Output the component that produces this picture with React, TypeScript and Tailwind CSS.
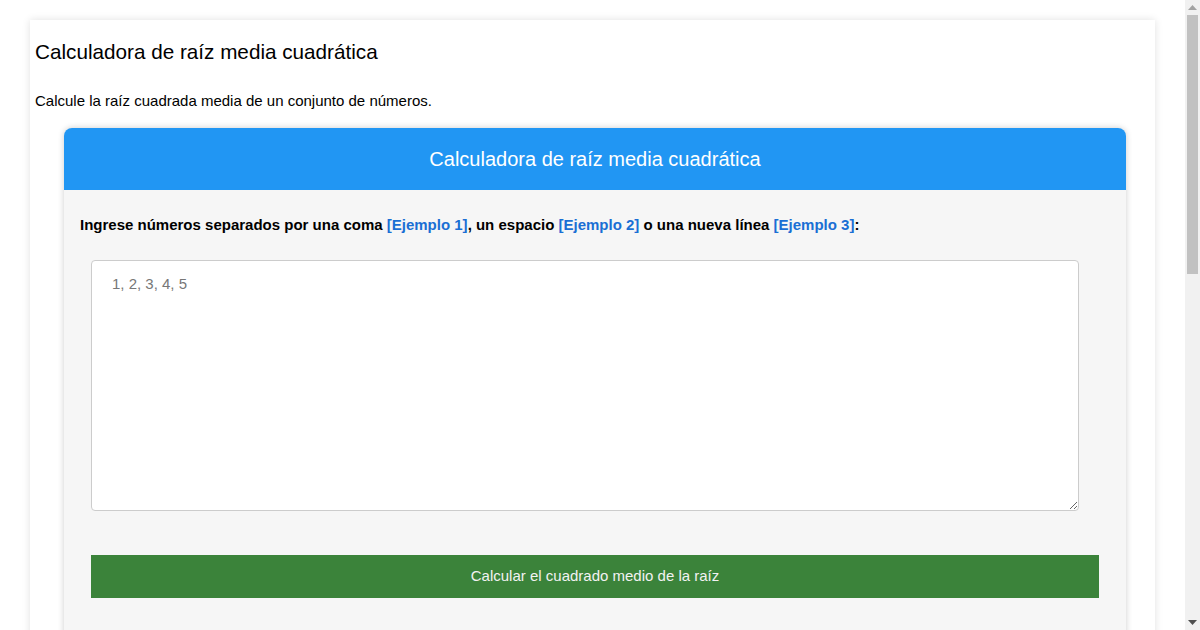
function FakeScrollbar() {
  return (
    <aside className="sticky top-0 flex h-[630px] w-[15px] shrink-0 flex-col items-center bg-[#f1f1f1]">
      <div className="flex h-[15px] items-center justify-center">
        <svg width="9" height="5" viewBox="0 0 9 5">
          <path d="M4.5 0 L9 5 L0 5 Z" fill="#a3a3a3" />
        </svg>
      </div>
      <div className="h-[259px] w-[11px] bg-[#c1c1c1]" />
      <div className="flex-1" />
      <div className="flex h-[15px] items-center justify-center">
        <svg width="9" height="5" viewBox="0 0 9 5">
          <path d="M0 0 L9 0 L4.5 5 Z" fill="#505050" />
        </svg>
      </div>
    </aside>
  );
}

export default function App() {
  return (
    <div className="flex bg-white font-['Liberation_Sans',Arial,sans-serif] text-black">
      <main className="min-h-[760px] flex-1 pt-[20px]">
        <div className="mx-[30px] bg-white px-[5px] pb-[40px] pt-[20px] shadow-[0_0_8px_rgba(0,0,0,0.12)]">
          <h1 className="text-[20.7px] leading-[23px]">Calculadora de raíz media cuadrática</h1>
          <p className="mt-[29px] text-[15px] leading-[17px]">
            Calcule la raíz cuadrada media de un conjunto de números.
          </p>

          <div className="ml-[29px] mt-[19px] w-[1062px] rounded-t-[8px] bg-[#f6f6f6] shadow-[0_0_6px_rgba(0,0,0,0.2)]">
            <div className="flex h-[62px] items-center justify-center rounded-t-[8px] bg-[#2196f3] text-[20px] text-white">
              Calculadora de raíz media cuadrática
            </div>

            <div className="px-[16px] pb-[40px] pt-[26px]">
              <p className="text-[15px] font-bold leading-[18px]">
                Ingrese números separados por una coma{' '}
                <a href="#" className="text-[#1a6fd4]">[Ejemplo 1]</a>, un espacio{' '}
                <a href="#" className="text-[#1a6fd4]">[Ejemplo 2]</a> o una nueva línea{' '}
                <a href="#" className="text-[#1a6fd4]">[Ejemplo 3]</a>:
              </p>

              <div className="px-[11px] pt-[26px]">
                <textarea
                  placeholder="1, 2, 3, 4, 5"
                  className="block h-[251px] w-[988px] rounded-[4px] border border-[#cccccc] bg-white px-[20px] py-[14px] text-[15px] leading-[18px] text-black outline-none placeholder:text-[#777777]"
                />
                <button className="mt-[44px] flex h-[43px] w-full items-center justify-center bg-[#3b833a] text-[15px] text-[#f2f2f2]">
                  Calcular el cuadrado medio de la raíz
                </button>
              </div>
            </div>
          </div>
        </div>
      </main>
      <FakeScrollbar />
    </div>
  );
}
